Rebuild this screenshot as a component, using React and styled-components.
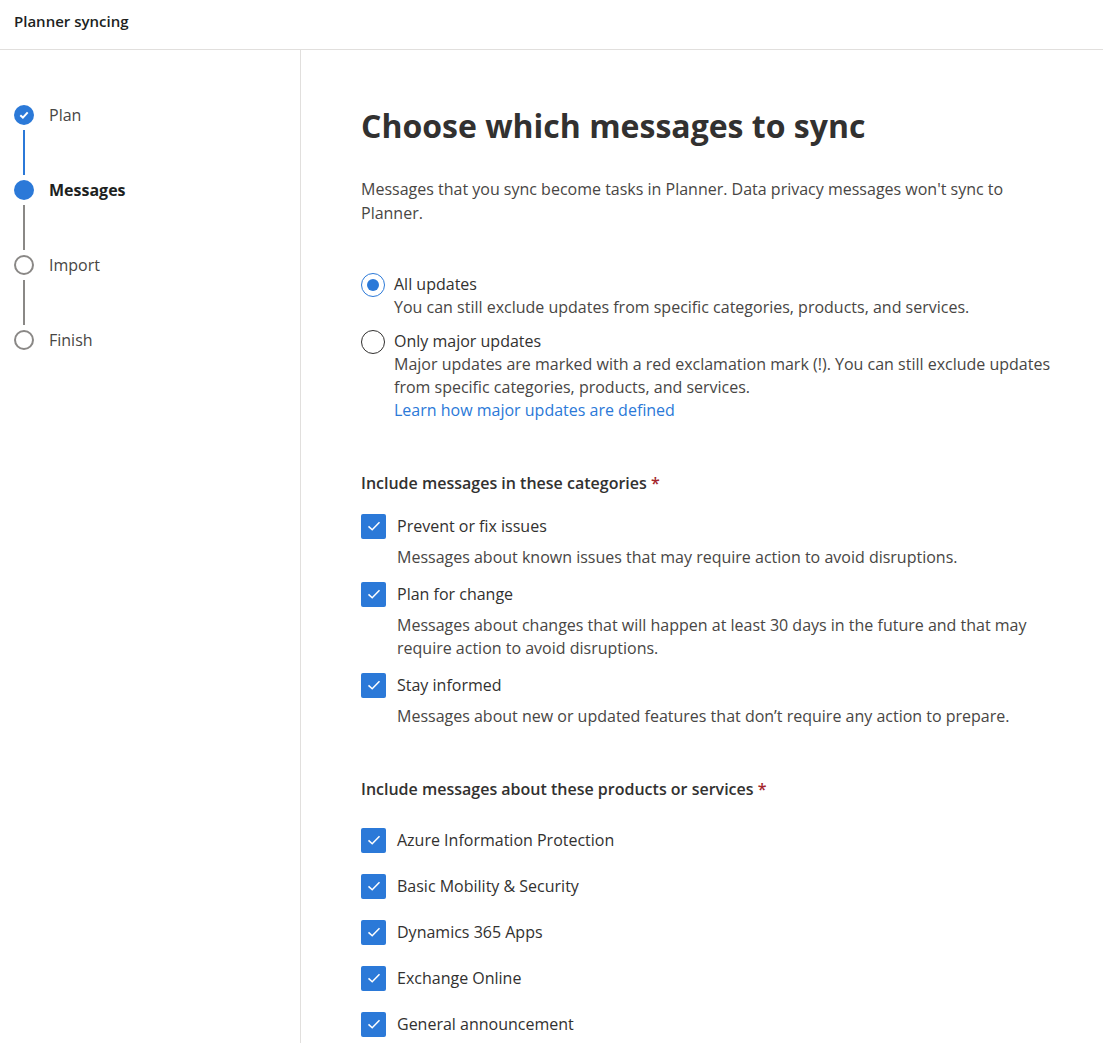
import React from "react";
import styled, { createGlobalStyle } from "styled-components";

const Global = createGlobalStyle`
  body { margin: 0; font-family: "Open Sans", "Noto Sans", sans-serif; color: #323130; background: #fff; }
  * { box-sizing: border-box; }
`;

const steps = [
  { label: "Plan", state: "done" },
  { label: "Messages", state: "current" },
  { label: "Import", state: "todo" },
  { label: "Finish", state: "todo" },
];

const categories = [
  { label: "Prevent or fix issues", desc: "Messages about known issues that may require action to avoid disruptions." },
  { label: "Plan for change", desc: "Messages about changes that will happen at least 30 days in the future and that may require action to avoid disruptions." },
  { label: "Stay informed", desc: "Messages about new or updated features that don’t require any action to prepare." },
];

const products = [
  "Azure Information Protection",
  "Basic Mobility & Security",
  "Dynamics 365 Apps",
  "Exchange Online",
  "General announcement",
];

const App = () => (
  <Page>
    <Global />
    <Header>Planner syncing</Header>
    <Body>
      <Nav>
        {steps.map((s, i) => (
          <Step key={s.label}>
            <Track>
              <Dot state={s.state}>
                {s.state === "done" && (
                  <svg width="12" height="12" viewBox="0 0 12 12">
                    <path d="M2.3 6.2 L4.9 8.6 L9.7 3.4" fill="none" stroke="#fff" strokeWidth="2" />
                  </svg>
                )}
              </Dot>
              {i < steps.length - 1 && <Line active={s.state === "done"} />}
            </Track>
            <StepLabel bold={s.state === "current"}>{s.label}</StepLabel>
          </Step>
        ))}
      </Nav>
      <Main>
        <Title>Choose which messages to sync</Title>
        <Intro>Messages that you sync become tasks in Planner. Data privacy messages won't sync to Planner.</Intro>
        <RadioGroup>
          <Option>
            <Radio checked />
            <div>
              <Label>All updates</Label>
              <Desc>You can still exclude updates from specific categories, products, and services.</Desc>
            </div>
          </Option>
          <Option>
            <Radio />
            <div>
              <Label>Only major updates</Label>
              <Desc>Major updates are marked with a red exclamation mark (!). You can still exclude updates from specific categories, products, and services.</Desc>
              <Link>Learn how major updates are defined</Link>
            </div>
          </Option>
        </RadioGroup>
        <SectionTitle>Include messages in these categories <Req>*</Req></SectionTitle>
        <List>
          {categories.map((c) => (
            <CheckItem key={c.label}>
              <CheckRow><Check /><CheckLabel>{c.label}</CheckLabel></CheckRow>
              <CheckDesc>{c.desc}</CheckDesc>
            </CheckItem>
          ))}
        </List>
        <SectionTitle>Include messages about these products or services <Req>*</Req></SectionTitle>
        <Products>
          {products.map((p) => (
            <CheckRow key={p}><Check /><CheckLabel>{p}</CheckLabel></CheckRow>
          ))}
        </Products>
      </Main>
    </Body>
  </Page>
);

const Check = () => (
  <Box>
    <svg width="16" height="16" viewBox="0 0 16 16">
      <path d="M2.5 8.4 L6.2 11.8 L13.5 4.2" fill="none" stroke="#fff" strokeWidth="1.5" />
    </svg>
  </Box>
);

export default App;

const Page = styled.div`
  height: 1043px;
  overflow: hidden;
  display: flex;
  flex-direction: column;
`;

const Header = styled.div`
  flex: none;
  height: 50px;
  border-bottom: 1px solid #e1dfdd;
  padding: 10px 14px;
  font-size: 15px;
  font-weight: 600;
  line-height: 22px;
  color: #201f1e;
`;

const Body = styled.div`
  flex: 1;
  display: flex;
`;

const Nav = styled.div`
  width: 301px;
  border-right: 1px solid #e1dfdd;
  padding: 55px 0 0 14px;
`;

const Step = styled.div`
  display: flex;
  gap: 15px;
`;

const Track = styled.div`
  width: 20px;
  display: flex;
  flex-direction: column;
  align-items: center;
`;

const Dot = styled.div`
  width: 20px;
  height: 20px;
  border-radius: 50%;
  display: flex;
  align-items: center;
  justify-content: center;
  background: ${(p) => (p.state === "todo" ? "#fff" : "#2b79d8")};
  border: ${(p) => (p.state === "todo" ? "2px solid #8a8886" : "none")};
`;

const Line = styled.div`
  width: 2px;
  height: 45px;
  margin: 5px 0;
  background: ${(p) => (p.active ? "#2b79d8" : "#8a8886")};
`;

const StepLabel = styled.div`
  font-size: 16px;
  line-height: 20px;
  font-weight: ${(p) => (p.bold ? 700 : 400)};
  color: ${(p) => (p.bold ? "#201f1e" : "#484644")};
`;

const Main = styled.div`
  flex: 1;
  padding: 52px 20px 0 60px;
`;

const Title = styled.h1`
  margin: 0;
  font-size: 32px;
  line-height: 48px;
  font-weight: 700;
  color: #323130;
`;

const Intro = styled.p`
  margin: 27px 0 0;
  max-width: 670px;
  font-size: 16px;
  line-height: 24px;
  color: #484644;
`;

const RadioGroup = styled.div`
  margin-top: 48px;
  display: flex;
  flex-direction: column;
  gap: 11px;
`;

const Option = styled.div`
  display: flex;
  gap: 9px;
`;

const Radio = styled.div`
  flex: none;
  width: 24px;
  height: 24px;
  border-radius: 50%;
  border: 1px solid ${(p) => (p.checked ? "#2b79d8" : "#323130")};
  display: flex;
  align-items: center;
  justify-content: center;
  &::after {
    content: "";
    display: ${(p) => (p.checked ? "block" : "none")};
    width: 12px;
    height: 12px;
    border-radius: 50%;
    background: #2b79d8;
  }
`;

const Label = styled.div`
  font-size: 16px;
  line-height: 23px;
  color: #323130;
`;

const Desc = styled.div`
  font-size: 16px;
  line-height: 23px;
  color: #484644;
`;

const Link = styled.a`
  display: block;
  font-size: 16px;
  line-height: 23px;
  color: #2b79d8;
  cursor: pointer;
`;

const SectionTitle = styled.div`
  margin-top: 49px;
  font-size: 16px;
  line-height: 24px;
  font-weight: 600;
  color: #323130;
`;

const Req = styled.span`
  color: #a4262c;
`;

const List = styled.div`
  margin-top: 19px;
  display: flex;
  flex-direction: column;
  gap: 13px;
`;

const CheckItem = styled.div``;

const CheckRow = styled.div`
  display: flex;
  align-items: center;
  gap: 11px;
  height: 24px;
`;

const Box = styled.div`
  flex: none;
  width: 25px;
  height: 25px;
  border-radius: 2px;
  background: #2b79d8;
  display: flex;
  align-items: center;
  justify-content: center;
`;

const CheckLabel = styled.div`
  font-size: 16px;
  color: #323130;
`;

const CheckDesc = styled.div`
  margin-top: 8px;
  padding-left: 36px;
  font-size: 16px;
  line-height: 23px;
  color: #484644;
`;

const Products = styled.div`
  margin-top: 27px;
  display: flex;
  flex-direction: column;
  gap: 22px;
`;
